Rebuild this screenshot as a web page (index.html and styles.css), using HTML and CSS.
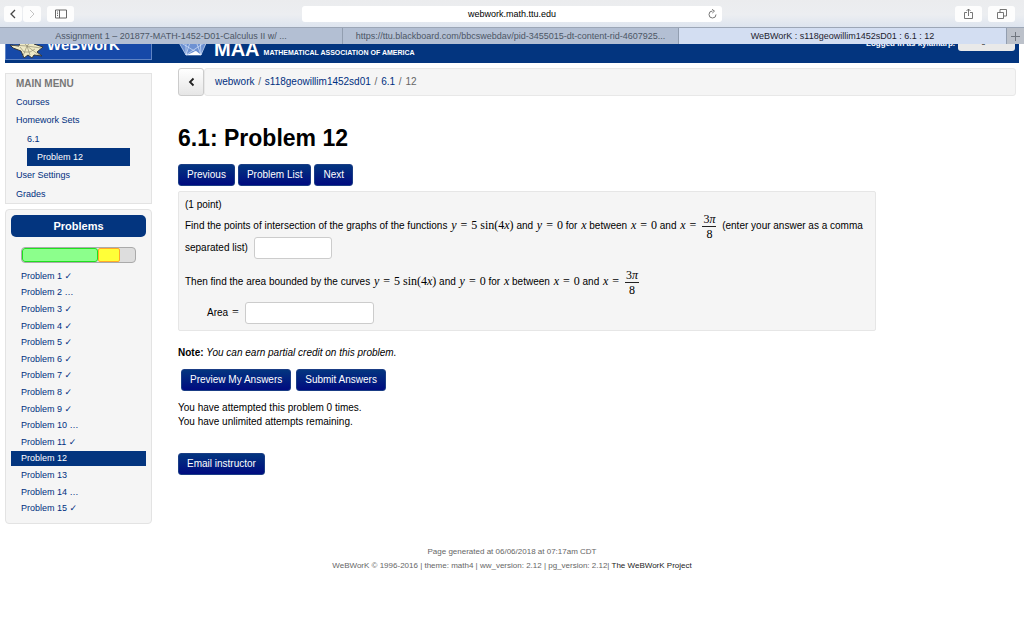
FILE: index.html
```
<!DOCTYPE html>
<html lang="en">
<head>
<meta charset="utf-8">
<title>WeBWorK : s118geowillim1452sD01 : 6.1 : 12</title>
<link rel="stylesheet" href="styles.css">
</head>
<body>
<div class="toolbar">
  <div class="tools">
    <div class="pair">
      <button class="tool" aria-label="Back"><svg width="8" height="10" viewBox="0 0 8 10"><path d="M6 1 2 5l4 4" fill="none" stroke="#444" stroke-width="1.3"/></svg></button>
      <button class="tool" aria-label="Forward"><svg width="8" height="10" viewBox="0 0 8 10"><path d="M2 1l4 4-4 4" fill="none" stroke="#c4c4c4"/></svg></button>
    </div>
    <button class="tool wide" aria-label="Sidebar"><svg width="12" height="10" viewBox="0 0 12 10"><path d="M.5 1h11v8H.5zM4.5 1v8M2 3h1M2 4.700h1M2 6.500h1" fill="none" stroke="#555" stroke-width=".9"/></svg></button>
  </div>
  <div class="address">
    <input class="url" type="text" value="webwork.math.ttu.edu" aria-label="Address">
    <button class="reload" aria-label="Reload"><svg width="9" height="10" viewBox="0 0 9 10"><path d="M4.500 2A3.500 3.500 0 1 0 8 5.500M4 .3l2.500 1.800L4.300 4" fill="none" stroke="#777"/></svg></button>
  </div>
  <div class="tools end">
    <button class="tool wide" aria-label="Share"><svg width="9" height="12" viewBox="0 0 9 12"><path d="M3 4.500H.500v6h8v-6H6M4.500 8V1M2.500 3l2-2 2 2" fill="none" stroke="#666" stroke-width=".9"/></svg></button>
    <button class="tool wide" aria-label="Tabs"><svg width="10" height="10" viewBox="0 0 10 10"><path d="M.5 3.500h6v6h-6zM3 3.500v-3h6.500V7h-3" fill="none" stroke="#666" stroke-width=".9"/></svg></button>
  </div>
</div>
<nav class="tabs" aria-label="Tabs">
  <button class="tab">Assignment 1 – 201877-MATH-1452-D01-Calculus II w/ ...</button>
  <button class="tab">https://ttu.blackboard.com/bbcswebdav/pid-3455015-dt-content-rid-4607925...</button>
  <button class="tab current">WeBWorK : s118geowillim1452sD01 : 6.1 : 12</button>
  <button class="tab add" aria-label="New tab"><svg width="9" height="9" viewBox="0 0 9 9"><path d="M4.500 0v9M0 4.500h9" stroke="#70767f"/></svg></button>
</nav>

<header class="masthead">
  <div class="brand">
    <svg class="web" width="36" height="26" viewBox="0 0 36 26"><path d="M1 12l9 1 2-8 6 6 9-8-2 8 9 3-6 5 5 4-8-1-2 3-4-3-4 3-3-7-8-3z" fill="#eee9c6" stroke="#34363a"/><path d="M18 13 4 12M18 13 12 7M18 13l8-8M18 13l14 2M18 13l12 9M18 13l-4 10M18 13l3 9M11 14l4 5 6 0 5-3" fill="none" stroke="#85826a" stroke-width=".6"/></svg>
    <span class="brand-name">WeBWorK</span>
  </div>
  <div class="maa">
    <svg width="30" height="24" viewBox="0 0 30 24"><path d="M0 8 15 0l14 8-6 14H8z" fill="#6d91d2"/><path d="M0 8l8 14 15 0 6-14M0 8l23 14M29 8 8 22M8 2l0 20M22 2l1 20M0 8h29M15 0 8 22M15 0l8 22" fill="none" stroke="#d8e5fa" stroke-width=".7"/><path d="M9 22l9-4 5 4z" fill="#fff"/></svg>
    <span class="maa-short">MAA</span>
    <span class="maa-long">MATHEMATICAL ASSOCIATION OF AMERICA</span>
  </div>
  <div class="login">
    <span class="login-name">Logged in as kylamarp.</span>
    <button class="logout">Log Out</button>
  </div>
</header>

<div class="columns">
  <aside class="side">
    <nav class="menu">
      <h2 class="menu-title">MAIN MENU</h2>
      <ul class="menu-list">
        <li><a href="#">Courses</a></li>
        <li><a href="#">Homework Sets</a></li>
        <li class="sub"><a href="#">6.1</a></li>
        <li class="sub on"><a href="#">Problem 12</a></li>
        <li><a href="#">User Settings</a></li>
        <li><a href="#">Grades</a></li>
      </ul>
    </nav>
    <nav class="problems">
      <h2 class="problems-title">Problems</h2>
      <div class="progress"><span class="done"></span><span class="partial"></span></div>
      <ul class="problem-list">
        <li><a href="#">Problem 1 <b>✓</b></a></li>
        <li><a href="#">Problem 2 …</a></li>
        <li><a href="#">Problem 3 <b>✓</b></a></li>
        <li><a href="#">Problem 4 <b>✓</b></a></li>
        <li><a href="#">Problem 5 <b>✓</b></a></li>
        <li><a href="#">Problem 6 <b>✓</b></a></li>
        <li><a href="#">Problem 7 <b>✓</b></a></li>
        <li><a href="#">Problem 8 <b>✓</b></a></li>
        <li><a href="#">Problem 9 <b>✓</b></a></li>
        <li><a href="#">Problem 10 …</a></li>
        <li><a href="#">Problem 11 <b>✓</b></a></li>
        <li class="on"><a href="#">Problem 12</a></li>
        <li><a href="#">Problem 13</a></li>
        <li><a href="#">Problem 14 …</a></li>
        <li><a href="#">Problem 15 <b>✓</b></a></li>
      </ul>
    </nav>
  </aside>

  <main class="main">
    <nav class="crumbs" aria-label="Breadcrumb">
      <button class="up" aria-label="Up"><svg width="7" height="10" viewBox="0 0 7 10"><path d="M5.500 1.500 2 5l3.500 3.500" fill="none" stroke="#222" stroke-width="1.800"/></svg></button>
      <div class="trail"><a href="#">webwork</a> <i>/</i> <a href="#">s118geowillim1452sd01</a> <i>/</i> <a href="#">6.1</a> <i>/</i> <span>12</span></div>
    </nav>
    <h1 class="title">6.1: Problem 12</h1>
    <div class="row">
      <button class="btn">Previous</button>
      <button class="btn">Problem List</button>
      <button class="btn">Next</button>
    </div>
    <form class="problem">
      <p class="points">(1 point)</p>
      <p class="statement">
        <label for="ans1">Find the points of intersection of the graphs of the functions <span class="math"><i>y</i> <span class="eq">=</span> 5 sin(4<i>x</i>)</span> and <span class="math"><i>y</i> <span class="eq">=</span> 0</span> for <span class="math"><i>x</i></span> between <span class="math"><i>x</i> <span class="eq">=</span> 0</span> and <span class="math"><i>x</i> <span class="eq">=</span> <span class="frac"><span class="num">3<i>π</i></span><span>8</span></span></span> (enter your answer as a comma<br>separated list)</label>
        <input class="field short" id="ans1" type="text">
      </p>
      <p class="statement second">Then find the area bounded by the curves <span class="math"><i>y</i> <span class="eq">=</span> 5 sin(4<i>x</i>)</span> and <span class="math"><i>y</i> <span class="eq">=</span> 0</span> for <span class="math"><i>x</i></span> between <span class="math"><i>x</i> <span class="eq">=</span> 0</span> and <span class="math"><i>x</i> <span class="eq">=</span> <span class="frac"><span class="num">3<i>π</i></span><span>8</span></span></span></p>
      <p class="area"><label for="ans2">Area <span class="math">=</span></label> <input class="field long" id="ans2" type="text"></p>
    </form>
    <p class="note"><b>Note:</b> <em>You can earn partial credit on this problem.</em></p>
    <div class="row answers">
      <button class="btn">Preview My Answers</button>
      <button class="btn">Submit Answers</button>
    </div>
    <p class="attempts">You have attempted this problem 0 times.<br>You have unlimited attempts remaining.</p>
    <div class="row"><button class="btn">Email instructor</button></div>
  </main>
</div>

<footer class="footer">
  <p>Page generated at 06/06/2018 at 07:17am CDT</p>
  <p>WeBWorK © 1996-2016 | theme: math4 | ww_version: 2.12 | pg_version: 2.12| <a href="#">The WeBWorK Project</a></p>
</footer>
</body>
</html>
```
FILE: styles.css
```
* { box-sizing: border-box; }
body { margin: 0; background: #fff; color: #000; font: 10px/14px "Liberation Sans", Arial, sans-serif; }
p, h1, h2, ul { margin: 0; padding: 0; }
ul { list-style: none; }
button, input { font: inherit; color: inherit; margin: 0; }
button { border: 0; padding: 0; cursor: pointer; }
a { color: #002f80; text-decoration: none; }

.toolbar { display: grid; grid-template-columns: 1fr 420px 1fr; align-items: center; height: 27px; padding: 0 4px; background: linear-gradient(#ebecee, #eceef1 55%, #dde4ef); }
.tools, .pair { display: flex; gap: 6px; }
.pair { gap: 1px; }
.end { justify-content: flex-end; padding-right: 5px; }
.tool { display: grid; place-items: center; width: 18px; height: 16px; background: #fdfdfd; border-radius: 3px; }
.wide { width: 27px; }
.address { display: flex; align-items: center; height: 16px; background: #fff; border-radius: 3px; }
.url { flex: 1; min-width: 0; height: 16px; border: 0; padding: 0 0 0 14px; background: none; text-align: center; font-size: 9px; }
.reload { display: grid; margin-right: 5px; background: none; }

.tabs { display: grid; grid-template-columns: 343fr 336fr 328fr 17px; height: 17px; border-top: 1px solid #9ca6b6; }
.tab { background: #b3bfd3; border-right: 1px solid #929eb0; color: #4c5665; font-size: 9px; line-height: 15px; white-space: nowrap; overflow: hidden; }
.current { background: #d3def2; color: #1d232e; }
.add { display: grid; place-items: center; background: #bcc1ca; border: 0; }

.masthead { display: grid; grid-template-columns: 147px 1fr auto; grid-template-rows: 19px; align-items: end; column-gap: 26px; margin: 0 5px; overflow: hidden; background: #03357f; color: #fff; }
.brand { display: flex; align-items: flex-end; height: 40px; margin-bottom: 3px; padding-left: 3px; gap: 2px; background: #1649a8; border: 1px solid #5f84c4; }
.brand-name { padding-bottom: 5px; font-size: 15px; font-weight: bold; line-height: 18px; }
.maa { display: flex; align-items: flex-end; padding-bottom: 6px; white-space: nowrap; font-weight: bold; }
.maa-short { margin: 0 4px 0 6px; font-size: 20px; line-height: 16px; }
.maa-long { font-size: 7px; line-height: 8px; }
.login { display: flex; align-items: flex-end; gap: 3px; padding: 0 4px 12px 0; font-size: 8px; line-height: 12px; }
.login-name { padding-bottom: 1px; font-weight: bold; }
.logout { width: 57px; height: 20px; background: #e9e9e9; color: #333; border-radius: 3px; }

.columns { display: grid; grid-template-columns: 147px 1fr; column-gap: 26px; padding: 5px 8px 0 5px; }
.side { padding-top: 5px; }
.menu { padding-top: 1px; background: #f5f5f5; border: 1px solid #e3e3e3; }
.menu-title { padding-left: 10px; color: #777; font-size: 10px; line-height: 18px; }
.menu-list { display: grid; grid-auto-rows: 1fr; min-height: 110px; font-size: 9px; }
.menu-list li { display: grid; align-items: center; padding-left: 10px; }
.menu-list .sub { margin: 0 21px; padding-left: 0; }
.menu-list .on { padding-left: 10px; }
.on { background: #03357f; }
.on a { color: #fff; }

.problems { margin-top: 5px; padding: 5px 5px 6px; background: #f5f5f5; border: 1px solid #e3e3e3; border-radius: 4px; }
.problems-title { background: #03357f; color: #fff; border-radius: 5px; text-align: center; font-size: 11px; line-height: 22px; }
.progress { display: flex; height: 16px; margin: 10px 10px 5px; background: #ddd; border: 1px solid #aaa; border-radius: 4px; overflow: hidden; }
.done { width: 67%; background: #8cff8c; border: 1px solid #1fe01f; border-radius: 3px; }
.partial { width: 20%; background: #ffff38; border: 1px solid #ffa928; border-radius: 2px; }
.problem-list { display: grid; grid-auto-rows: 1fr; align-items: center; min-height: 249px; font-size: 9px; }
.problem-list li { height: 15px; padding-left: 10px; line-height: 15px; }
.problem-list b { font-family: "DejaVu Sans", sans-serif; font-size: 9px; line-height: 9px; }

.main { min-width: 0; }
.crumbs { display: flex; min-height: 28px; }
.up { display: grid; place-items: center; width: 26px; background: linear-gradient(#fff, #e6e6e6); border: 1px solid #ccc; border-radius: 3px; }
.trail { flex: 1; padding-left: 10px; background: #f5f5f5; border: 1px solid #e8e8e8; border-radius: 3px; line-height: 26px; color: #666; }
.trail i { font-style: normal; margin: 0 1px; }
.title { margin: 28px 0 12px; font-size: 23px; line-height: 28px; }
.row { display: flex; gap: 3px; }
.btn { height: 22px; padding: 0 8px; color: #fff; background: linear-gradient(#03357f, #000b80); border: 1px solid #1a3d85; border-radius: 3px; }
.problem { max-width: 698px; margin-top: 5px; padding: 6px; background: #f5f5f5; border: 1px solid #e6e6e6; border-radius: 2px; }
.points { margin-bottom: 4px; }
.statement { margin-bottom: 13px; white-space: nowrap; }
.second { margin-bottom: 9px; }
.math { margin-left: 1px; font-family: "Liberation Serif", "Times New Roman", serif; font-size: 12px; }
.eq { margin: 0 1px; }
.frac { display: inline-grid; vertical-align: middle; text-align: center; line-height: 14px; margin: -4px 3px -4px 2px; }
.num { padding: 0 1px; border-bottom: 1px solid #222; }
.field { height: 22px; background: #fff; border: 1px solid #ccc; border-radius: 3px; vertical-align: middle; }
.short { width: 78px; margin-left: 3px; }
.long { width: 129px; margin-left: 4px; }
.area { padding-left: 22px; }
.note { margin: 15px 0 9px; }
.answers { gap: 5px; padding-left: 3px; }
.attempts { margin: 10px 0 24px; }
.footer { margin-top: 21px; text-align: center; color: #666; font-size: 8px; }
.footer a { color: #222; }
```
